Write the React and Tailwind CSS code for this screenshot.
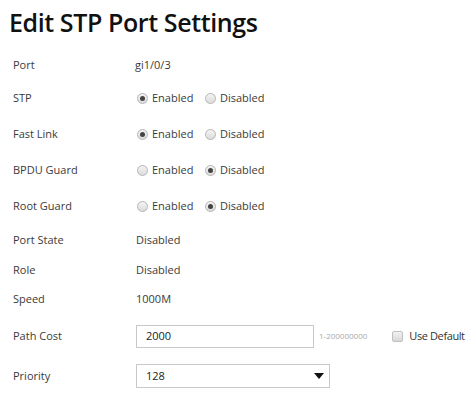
import React from 'react';

function Radio({ checked, label }) {
  return (
    <span className="flex items-center">
      <span className="w-[11px] h-[11px] rounded-full border border-[#b5b5b5] bg-gradient-to-b from-[#f4f4f4] to-[#dcdcdc] flex items-center justify-center">
        {checked && <span className="w-[5px] h-[5px] rounded-full bg-[#444]"></span>}
      </span>
      <span className="ml-[4px]">{label}</span>
    </span>
  );
}

function RadioPair({ enabled }) {
  return (
    <div className="flex items-center">
      <div className="w-[68px]"><Radio checked={enabled} label="Enabled" /></div>
      <Radio checked={!enabled} label="Disabled" />
    </div>
  );
}

function Row({ label, h, children }) {
  return (
    <div className={`flex items-center ${h}`}>
      <div className="w-[123px] pl-[13px]">{label}</div>
      <div className="flex items-center">{children}</div>
    </div>
  );
}

export default function App() {
  return (
    <div className="w-[474px] h-[395px] bg-white text-[#3a3a3a] text-[11px] overflow-hidden" style={{ fontFamily: '"Open Sans", "DejaVu Sans", sans-serif' }}>
      <h1 className="h-[50px] pl-[9px] pt-[4px] text-[25px] font-semibold text-[#111] leading-[36px] tracking-[-0.4px]">Edit STP Port Settings</h1>
      <Row label="Port" h="h-[30px]"><span className="ml-[12px]">gi1/0/3</span></Row>
      <Row label="STP" h="h-[36px]"><span className="ml-[14px]"><RadioPair enabled /></span></Row>
      <Row label="Fast Link" h="h-[36px]"><span className="ml-[14px]"><RadioPair enabled /></span></Row>
      <Row label="BPDU Guard" h="h-[36px]"><span className="ml-[14px]"><RadioPair enabled={false} /></span></Row>
      <Row label="Root Guard" h="h-[36px]"><span className="ml-[14px]"><RadioPair enabled={false} /></span></Row>
      <Row label="Port State" h="h-[32px]"><span className="ml-[13px]">Disabled</span></Row>
      <Row label="Role" h="h-[28px]"><span className="ml-[13px]">Disabled</span></Row>
      <Row label="Speed" h="h-[30px]"><span className="ml-[13px]">1000M</span></Row>
      <Row label="Path Cost" h="h-[44px]">
        <div className="ml-[13px] w-[178px] h-[23px] border border-[#c8c8c8] flex items-center pl-[9px] text-[#222]">2000</div>
        <span className="ml-[5px] text-[8px] text-[#aaa]">1-200000000</span>
        <span className="ml-[25px] w-[11px] h-[11px] rounded-[2px] border border-[#c0c0c0] bg-gradient-to-b from-[#f2f2f2] to-[#d8d8d8]"></span>
        <span className="ml-[6px] text-[#333] tracking-[-0.4px]">Use Default</span>
      </Row>
      <Row label="Priority" h="h-[36px]">
        <div className="ml-[13px] w-[194px] h-[24px] border border-[#c8c8c8] flex items-center justify-between pl-[9px] pr-[5px] text-[#222]">
          <span>128</span>
          <svg width="10" height="6" viewBox="0 0 10 6"><path d="M0 0 L10 0 L5 6 Z" fill="#111" /></svg>
        </div>
      </Row>
    </div>
  );
}
